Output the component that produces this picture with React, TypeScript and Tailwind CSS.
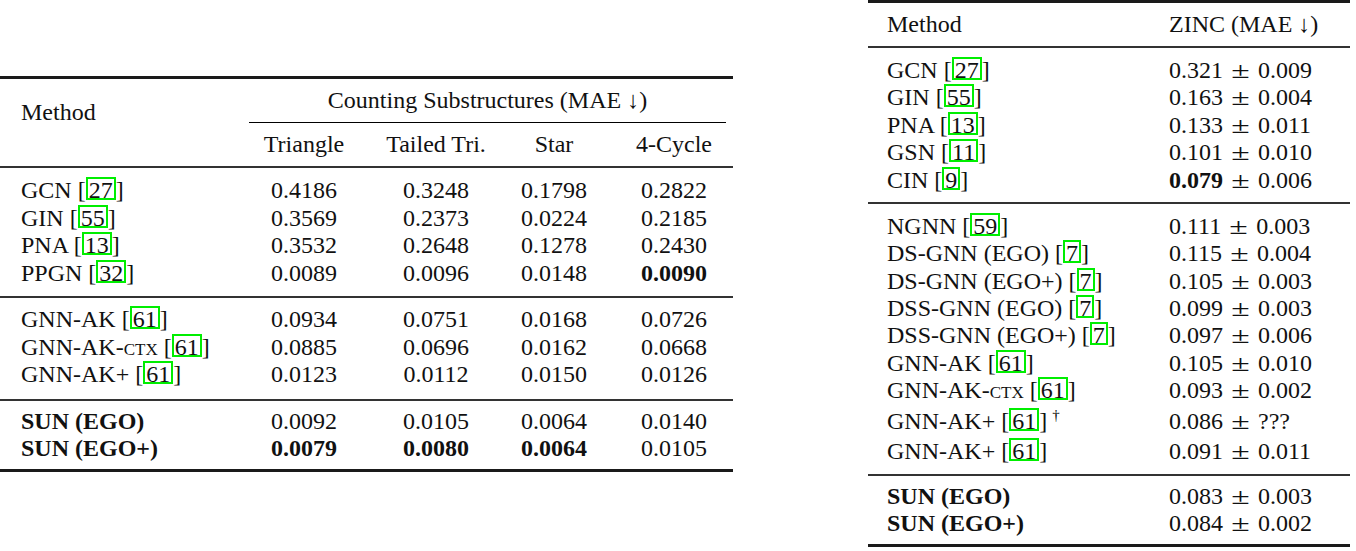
import React from "react";

const Cite = ({ n }: { n: string }) => (
  <>
    [
    <span className="inline-block h-[23px] border-2 border-[#00ee00] px-[1px] leading-[22px]">{n}</span>]
  </>
);

const Ctx = () => <span className="[font-variant-caps:small-caps]">ctx</span>;

const Pm = () => (
  <span className="inline-block w-[35px] text-center leading-none">
    <span className="inline-block scale-x-[1.4] leading-none">±</span>
  </span>
);

type LRow = { m: React.ReactNode; v: React.ReactNode[]; b?: boolean };

const leftGroups: LRow[][] = [
  [
    { m: <>GCN <Cite n="27" /></>, v: ["0.4186", "0.3248", "0.1798", "0.2822"] },
    { m: <>GIN <Cite n="55" /></>, v: ["0.3569", "0.2373", "0.0224", "0.2185"] },
    { m: <>PNA <Cite n="13" /></>, v: ["0.3532", "0.2648", "0.1278", "0.2430"] },
    { m: <>PPGN <Cite n="32" /></>, v: ["0.0089", "0.0096", "0.0148", <b key="b">0.0090</b>] },
  ],
  [
    { m: <>GNN-AK <Cite n="61" /></>, v: ["0.0934", "0.0751", "0.0168", "0.0726"] },
    { m: <>GNN-AK-<Ctx /> <Cite n="61" /></>, v: ["0.0885", "0.0696", "0.0162", "0.0668"] },
    { m: <>GNN-AK+ <Cite n="61" /></>, v: ["0.0123", "0.0112", "0.0150", "0.0126"] },
  ],
  [
    { m: <b>SUN (EGO)</b>, v: ["0.0092", "0.0105", "0.0064", "0.0140"] },
    {
      m: <b>SUN (EGO+)</b>,
      v: [<b key="1">0.0079</b>, <b key="2">0.0080</b>, <b key="3">0.0064</b>, "0.0105"],
    },
  ],
];

const groupPad = [
  "pt-[9px] pb-[9px]",
  "pt-[8px] pb-[10px]",
  "pt-[7px] pb-[8.5px]",
];

const colCls = ["w-[110px] text-center", "w-[154px] text-center", "w-[82px] text-center", "w-[138px] text-center pl-[20px]"];

function LeftTable() {
  return (
    <div className="w-[733px] mt-[76px] flex flex-col">
      <div className="h-[3px] bg-[#1a1a1a]" />
      <div className="flex">
        <div className="w-[249px] pl-[21px] pt-[20px] h-[87px]">Method</div>
        <div className="w-[484px] flex flex-col">
          <div className="h-[43px] flex items-center justify-center pr-[7px]">
            Counting Substructures (MAE ↓)
          </div>
          <div className="h-px bg-black w-[477px]" />
          <div className="h-[43px] flex items-center">
            <div className={colCls[0]}>Triangle</div>
            <div className={colCls[1]}>Tailed Tri.</div>
            <div className={colCls[2]}>Star</div>
            <div className={colCls[3]}>4-Cycle</div>
          </div>
        </div>
      </div>
      {leftGroups.map((g, gi) => (
        <React.Fragment key={gi}>
          <div className="h-[2px] bg-[#333]" />
          <div className={`flex flex-col ${groupPad[gi]}`}>
            {g.map((r, ri) => (
              <div key={ri} className="flex h-[27.5px] items-center">
                <div className="w-[249px] pl-[21px] whitespace-nowrap">{r.m}</div>
                {r.v.map((v, vi) => (
                  <div key={vi} className={colCls[vi]}>
                    {v}
                  </div>
                ))}
              </div>
            ))}
          </div>
        </React.Fragment>
      ))}
      <div className="h-[3px] bg-[#1a1a1a] -mt-[2px]" />
    </div>
  );
}

type RRow = { m: React.ReactNode; v: React.ReactNode; h?: string };

const V = ({ a, b, bold }: { a: string; b: string; bold?: boolean }) => (
  <>
    {bold ? <b>{a}</b> : a}
    <Pm />
    {b}
  </>
);

const rightGroups: RRow[][] = [
  [
    { m: <>GCN <Cite n="27" /></>, v: <V a="0.321" b="0.009" /> },
    { m: <>GIN <Cite n="55" /></>, v: <V a="0.163" b="0.004" /> },
    { m: <>PNA <Cite n="13" /></>, v: <V a="0.133" b="0.011" /> },
    { m: <>GSN <Cite n="11" /></>, v: <V a="0.101" b="0.010" /> },
    { m: <>CIN <Cite n="9" /></>, v: <V a="0.079" b="0.006" bold /> },
  ],
  [
    { m: <>NGNN <Cite n="59" /></>, v: <V a="0.111" b="0.003" /> },
    { m: <>DS-GNN (EGO) <Cite n="7" /></>, v: <V a="0.115" b="0.004" /> },
    { m: <>DS-GNN (EGO+) <Cite n="7" /></>, v: <V a="0.105" b="0.003" /> },
    { m: <>DSS-GNN (EGO) <Cite n="7" /></>, v: <V a="0.099" b="0.003" /> },
    { m: <>DSS-GNN (EGO+) <Cite n="7" /></>, v: <V a="0.097" b="0.006" /> },
    { m: <>GNN-AK <Cite n="61" /></>, v: <V a="0.105" b="0.010" /> },
    { m: <>GNN-AK-<Ctx /> <Cite n="61" /></>, v: <V a="0.093" b="0.002" /> },
    {
      m: (
        <>
          GNN-AK+ <Cite n="61" />
          <span className="relative -top-[9px] ml-[5px] text-[15px] text-black">†</span>
        </>
      ),
      v: <V a="0.086" b="???" />,
      h: "h-[31px] pt-[3.6px]",
    },
    { m: <>GNN-AK+ <Cite n="61" /></>, v: <V a="0.091" b="0.011" />, h: "h-[30px] pt-[2.6px]" },
  ],
  [
    { m: <b>SUN (EGO)</b>, v: <V a="0.083" b="0.003" /> },
    { m: <b>SUN (EGO+)</b>, v: <V a="0.084" b="0.002" /> },
  ],
];

const rPad = ["pt-[9px] pb-[8px]", "pt-[9px] pb-[8px]", "pt-[7px] pb-[9px]"];

function RightTable() {
  return (
    <div className="w-[482px] ml-[135px] flex flex-col">
      <div className="h-[3px] bg-[#1a1a1a]" />
      <div className="flex h-[43px] items-center">
        <div className="w-[301px] pl-[19px]">Method</div>
        <div>ZINC (MAE ↓)</div>
      </div>
      {rightGroups.map((g, gi) => (
        <React.Fragment key={gi}>
          <div className="h-[2px] bg-[#333]" />
          <div className={`flex flex-col ${rPad[gi]}`}>
            {g.map((r, ri) => (
              <div key={ri} className={`flex ${r.h ?? "h-[27.4px] items-center"}`}>
                <div className="w-[301px] pl-[19px] whitespace-nowrap">{r.m}</div>
                <div className="whitespace-nowrap">{r.v}</div>
              </div>
            ))}
          </div>
        </React.Fragment>
      ))}
      <div className="h-[3px] bg-[#1a1a1a] -mt-[2px]" />
    </div>
  );
}

export default function App() {
  return (
    <div className="w-[1356px] h-[551px] bg-white text-[#111] overflow-hidden flex items-start font-['Liberation_Serif',serif] text-[24px] leading-[27.5px]">
      <LeftTable />
      <RightTable />
    </div>
  );
}
